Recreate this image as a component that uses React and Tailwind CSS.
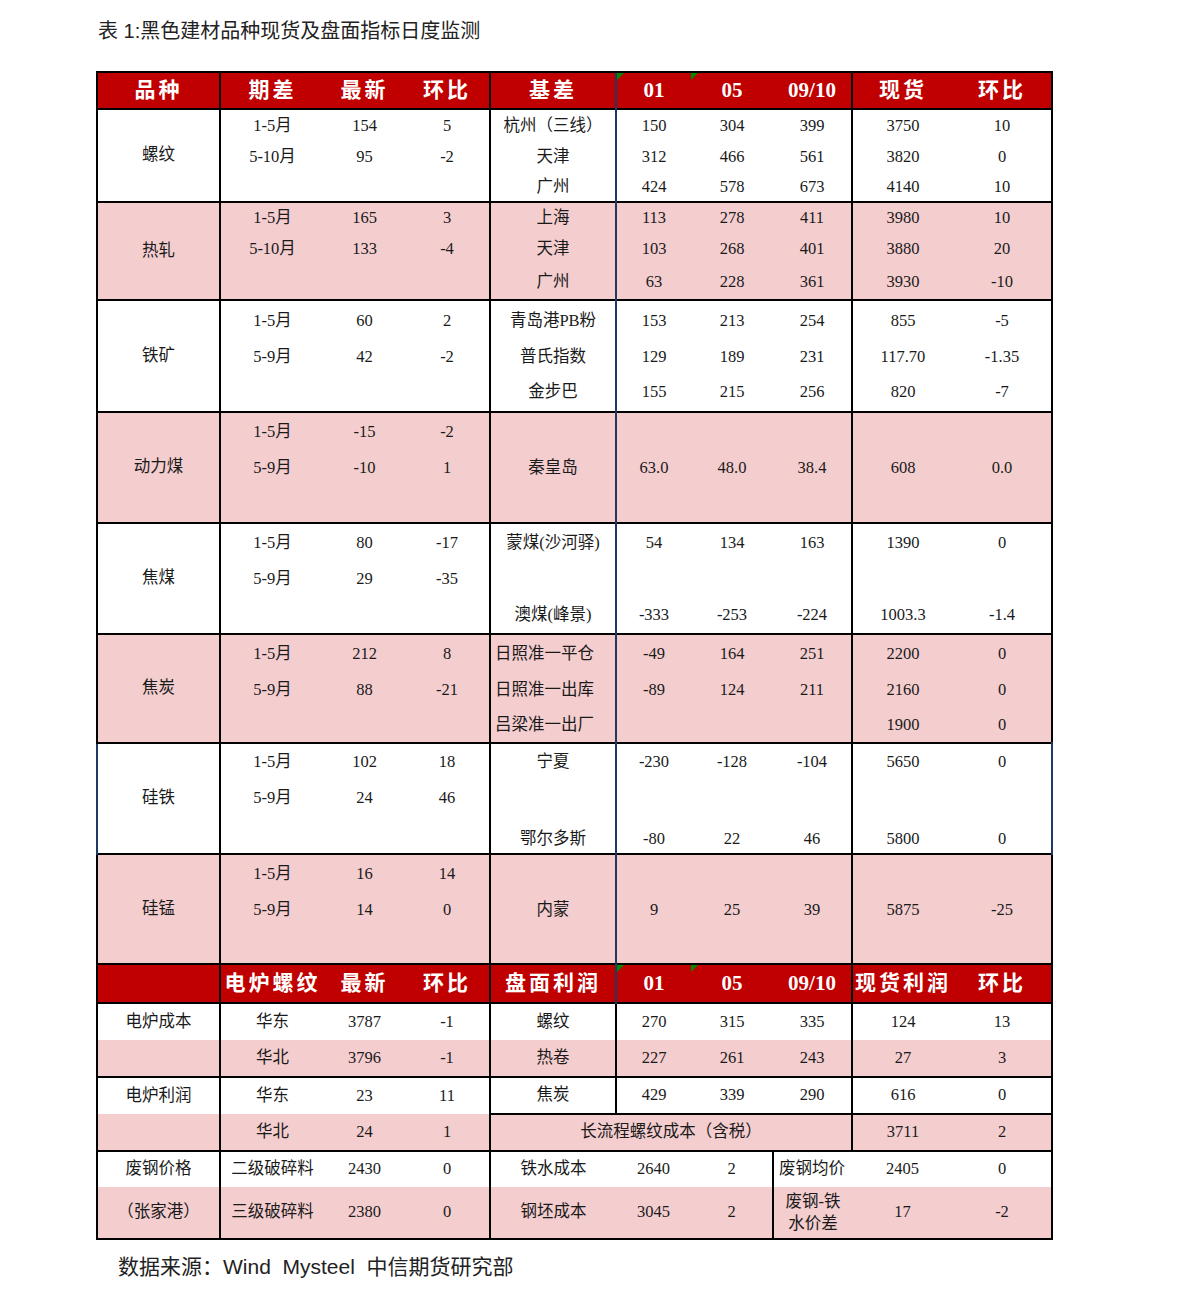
const PINK = 'bg-[#f4cdcf]';

const groups = [
  {
    name: '螺纹',
    bg: 'bg-white',
    hs: ['h-[33px]', 'h-[31px]', 'h-[29px]'],
    rows: [
      ['1-5月', '154', '5', '杭州（三线）', '150', '304', '399', '3750', '10'],
      ['5-10月', '95', '-2', '天津', '312', '466', '561', '3820', '0'],
      ['', '', '', '广州', '424', '578', '673', '4140', '10'],
    ],
  },
  {
    name: '热轧',
    bg: PINK,
    hs: ['h-[32px]', 'h-[31px]', 'h-[35px]'],
    rows: [
      ['1-5月', '165', '3', '上海', '113', '278', '411', '3980', '10'],
      ['5-10月', '133', '-4', '天津', '103', '268', '401', '3880', '20'],
      ['', '', '', '广州', '63', '228', '361', '3930', '-10'],
    ],
  },
  {
    name: '铁矿',
    bg: 'bg-white',
    hs: ['h-[41px]', 'h-[33px]', 'h-[38px]'],
    rows: [
      ['1-5月', '60', '2', '青岛港PB粉', '153', '213', '254', '855', '-5'],
      ['5-9月', '42', '-2', '普氏指数', '129', '189', '231', '117.70', '-1.35'],
      ['', '', '', '金步巴', '155', '215', '256', '820', '-7'],
    ],
  },
  {
    name: '动力煤',
    bg: PINK,
    hs: ['h-[39px]', 'h-[35px]', 'h-[37px]'],
    rows: [
      ['1-5月', '-15', '-2', '', '', '', '', '', ''],
      ['5-9月', '-10', '1', '秦皇岛', '63.0', '48.0', '38.4', '608', '0.0'],
      ['', '', '', '', '', '', '', '', ''],
    ],
  },
  {
    name: '焦煤',
    bg: 'bg-white',
    hs: ['h-[39px]', 'h-[35px]', 'h-[37px]'],
    rows: [
      ['1-5月', '80', '-17', '蒙煤(沙河驿)', '54', '134', '163', '1390', '0'],
      ['5-9月', '29', '-35', '', '', '', '', '', ''],
      ['', '', '', '澳煤(峰景)', '-333', '-253', '-224', '1003.3', '-1.4'],
    ],
  },
  {
    name: '焦炭',
    bg: PINK,
    hs: ['h-[39px]', 'h-[35px]', 'h-[35px]'],
    leftBasis: true,
    rows: [
      ['1-5月', '212', '8', '日照准一平仓', '-49', '164', '251', '2200', '0'],
      ['5-9月', '88', '-21', '日照准一出库', '-89', '124', '211', '2160', '0'],
      ['', '', '', '吕梁准一出厂', '', '', '', '1900', '0'],
    ],
  },
  {
    name: '硅铁',
    bg: 'bg-white',
    hs: ['h-[37px]', 'h-[37px]', 'h-[37px]'],
    lastBottom: true,
    navyEdge: true,
    rows: [
      ['1-5月', '102', '18', '宁夏', '-230', '-128', '-104', '5650', '0'],
      ['5-9月', '24', '46', '', '', '', '', '', ''],
      ['', '', '', '鄂尔多斯', '-80', '22', '46', '5800', '0'],
    ],
  },
  {
    name: '硅锰',
    bg: PINK,
    hs: ['h-[39px]', 'h-[35px]', 'h-[36px]'],
    rows: [
      ['1-5月', '16', '14', '', '', '', '', '', ''],
      ['5-9月', '14', '0', '内蒙', '9', '25', '39', '5875', '-25'],
      ['', '', '', '', '', '', '', '', ''],
    ],
  },
];

// vertical separators by column index (0..9)
function vline(col) {
  if (col === 1 || col === 4 || col === 8) return 'border-l-2 border-l-black';
  if (col === 5) return 'border-l-2 border-l-[#1f3864]';
  return '';
}

const td = 'p-0 text-center align-middle whitespace-nowrap';
const th = 'p-0 text-center align-middle whitespace-nowrap text-white font-bold bg-[#c00000]';

function Flag() {
  return (
    <span className="absolute left-0 top-0 h-0 w-0 border-t-[7px] border-r-[7px] border-t-[#008a00] border-r-transparent" />
  );
}

function HeaderRow({ labels, className }) {
  return (
    <tr className={className}>
      {labels.map((label, i) => (
        <th
          key={i}
          className={`${th} ${vline(i)} border-t-2 border-t-black relative ${
            i === 5 || i === 6 || i === 7
              ? "font-['Liberation_Serif',serif] text-[21px]"
              : 'text-[21px] tracking-[3px]'
          }`}
        >
          {(i === 5 || i === 6) && <Flag />}
          {label}
        </th>
      ))}
    </tr>
  );
}

export default function App() {
  return (
    <div className="w-[1191px] min-h-[1296px] bg-white text-[#1a1a1a] font-['Liberation_Serif','Noto_Sans_CJK_SC',serif]">
      {/* Title */}
      <div className="pt-[19px] pl-[98px] text-[20px] leading-[24px] text-[#222] font-['Liberation_Sans','Noto_Sans_CJK_SC',sans-serif]">
        表 1:黑色建材品种现货及盘面指标日度监测
      </div>

      <table className="mt-[28px] ml-[96px] w-[955px] table-fixed border-collapse border-2 border-black text-[16.5px]">
        <colgroup>
          <col className="w-[123px]" />
          <col className="w-[104px]" />
          <col className="w-[81px]" />
          <col className="w-[85px]" />
          <col className="w-[126px]" />
          <col className="w-[75px]" />
          <col className="w-[82px]" />
          <col className="w-[79px]" />
          <col className="w-[101px]" />
          <col className="w-[99px]" />
        </colgroup>
        <tbody>
          <HeaderRow
            className="h-[37px]"
            labels={['品种', '期差', '最新', '环比', '基差', '01', '05', '09/10', '现货', '环比']}
          />

          {groups.map((g) =>
            g.rows.map((r, i) => (
              <tr key={g.name + i} className={`${g.hs[i]} ${g.bg}`}>
                {i === 0 && (
                  <td
                    rowSpan={3}
                    className={`${td} border-t-2 border-t-black ${g.navyEdge ? 'border-l-2 border-l-[#1f3864]' : ''}`}
                  >
                    {g.name}
                  </td>
                )}
                {r.map((v, j) => {
                  const col = j + 1;
                  const basis = col === 4 && g.leftBasis ? 'text-left pl-[4px]' : '';
                  const bottom = i === 2 && g.lastBottom ? '!align-bottom pb-[1px]' : '';
                  const edge = col === 9 && g.navyEdge ? 'border-r-2 border-r-[#1f3864]' : '';
                  return (
                    <td
                      key={j}
                      className={`${td} ${vline(col)} ${i === 0 ? 'border-t-2 border-t-black' : ''} ${basis} ${bottom} ${edge}`}
                    >
                      {v}
                    </td>
                  );
                })}
              </tr>
            ))
          )}

          <HeaderRow
            className="h-[39px]"
            labels={['', '电炉螺纹', '最新', '环比', '盘面利润', '01', '05', '09/10', '现货利润', '环比']}
          />

          {/* 电炉成本 */}
          <tr className="h-[37px] bg-white">
            <td className={`${td} border-t-2 border-t-black`}>电炉成本</td>
            <td className={`${td} ${vline(1)} border-t-2 border-t-black`}>华东</td>
            <td className={`${td} border-t-2 border-t-black`}>3787</td>
            <td className={`${td} border-t-2 border-t-black`}>-1</td>
            <td className={`${td} ${vline(4)} border-t-2 border-t-black`}>螺纹</td>
            <td className={`${td} border-l-2 border-l-black border-t-2 border-t-black`}>270</td>
            <td className={`${td} border-t-2 border-t-black`}>315</td>
            <td className={`${td} border-t-2 border-t-black`}>335</td>
            <td className={`${td} ${vline(8)} border-t-2 border-t-black`}>124</td>
            <td className={`${td} border-t-2 border-t-black`}>13</td>
          </tr>
          <tr className={`h-[37px] ${PINK}`}>
            <td className={td}></td>
            <td className={`${td} ${vline(1)}`}>华北</td>
            <td className={td}>3796</td>
            <td className={td}>-1</td>
            <td className={`${td} ${vline(4)}`}>热卷</td>
            <td className={`${td} border-l-2 border-l-black`}>227</td>
            <td className={td}>261</td>
            <td className={td}>243</td>
            <td className={`${td} ${vline(8)}`}>27</td>
            <td className={td}>3</td>
          </tr>

          {/* 电炉利润 */}
          <tr className="h-[37px] bg-white">
            <td className={`${td} border-t-2 border-t-black`}>电炉利润</td>
            <td className={`${td} ${vline(1)} border-t-2 border-t-black`}>华东</td>
            <td className={`${td} border-t-2 border-t-black`}>23</td>
            <td className={`${td} border-t-2 border-t-black`}>11</td>
            <td className={`${td} ${vline(4)} border-t-2 border-t-black`}>焦炭</td>
            <td className={`${td} border-l-2 border-l-black border-t-2 border-t-black`}>429</td>
            <td className={`${td} border-t-2 border-t-black`}>339</td>
            <td className={`${td} border-t-2 border-t-black`}>290</td>
            <td className={`${td} ${vline(8)} border-t-2 border-t-black`}>616</td>
            <td className={`${td} border-t-2 border-t-black`}>0</td>
          </tr>
          <tr className={`h-[37px] ${PINK}`}>
            <td className={td}></td>
            <td className={`${td} ${vline(1)}`}>华北</td>
            <td className={td}>24</td>
            <td className={td}>1</td>
            <td colSpan={4} className={`${td} ${vline(4)} border-t-2 border-t-black`}>
              长流程螺纹成本（含税）
            </td>
            <td className={`${td} ${vline(8)} border-t-2 border-t-black`}>3711</td>
            <td className={`${td} border-t-2 border-t-black`}>2</td>
          </tr>

          {/* 废钢价格 */}
          <tr className="h-[36px] bg-white">
            <td className={`${td} border-t-2 border-t-black`}>废钢价格</td>
            <td className={`${td} ${vline(1)} border-t-2 border-t-black`}>二级破碎料</td>
            <td className={`${td} border-t-2 border-t-black`}>2430</td>
            <td className={`${td} border-t-2 border-t-black`}>0</td>
            <td className={`${td} ${vline(4)} border-t-2 border-t-black`}>铁水成本</td>
            <td className={`${td} border-t-2 border-t-black`}>2640</td>
            <td className={`${td} border-t-2 border-t-black`}>2</td>
            <td className={`${td} border-l-2 border-l-black border-t-2 border-t-black text-left pl-[5px]`}>废钢均价</td>
            <td className={`${td} border-t-2 border-t-black`}>2405</td>
            <td className={`${td} border-t-2 border-t-black`}>0</td>
          </tr>
          <tr className={`h-[52px] ${PINK}`}>
            <td className={td}>（张家港）</td>
            <td className={`${td} ${vline(1)}`}>三级破碎料</td>
            <td className={td}>2380</td>
            <td className={td}>0</td>
            <td className={`${td} ${vline(4)}`}>钢坯成本</td>
            <td className={td}>3045</td>
            <td className={td}>2</td>
            <td className={`${td} border-l-2 border-l-black leading-[22px]`}>
              废钢-铁
              <br />
              水价差
            </td>
            <td className={td}>17</td>
            <td className={td}>-2</td>
          </tr>
        </tbody>
      </table>

      {/* Source */}
      <div className="mt-[14px] pl-[118px] text-[21px] leading-[26px] text-[#222] whitespace-pre font-['Liberation_Sans','Noto_Sans_CJK_SC',sans-serif]">
        {'数据来源：Wind  Mysteel  中信期货研究部'}
      </div>
    </div>
  );
}
